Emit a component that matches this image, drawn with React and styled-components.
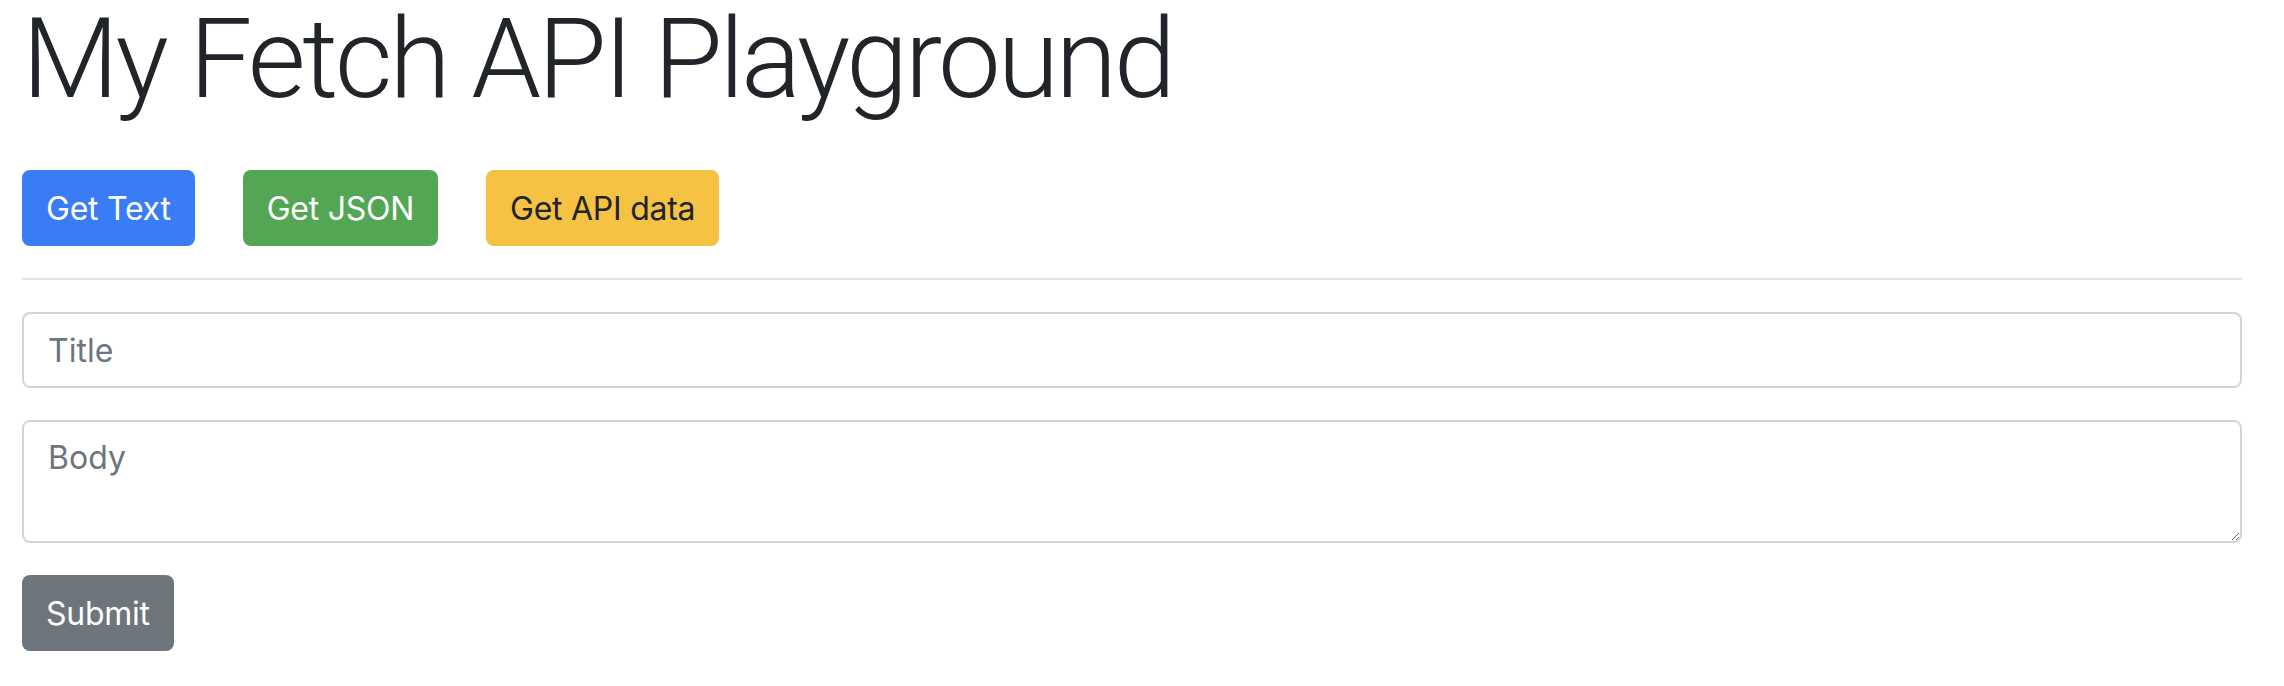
import React from "react";
import styled, { createGlobalStyle } from "styled-components";

const GlobalStyle = createGlobalStyle`
  html, body {
    margin: 0;
    padding: 0;
    background: #ffffff;
  }
  body {
    font-family: Inter, "Noto Sans", "Liberation Sans", sans-serif;
    color: #212529;
  }
`;

const Page = styled.div`
  padding: 0 42px 0 22px;
  display: flex;
  flex-direction: column;
`;

const Title = styled.h1`
  margin: 0;
  padding-top: 3px;
  font-family: Roboto, Inter, "Liberation Sans", sans-serif;
  font-size: 112px;
  font-weight: 300;
  line-height: 112px;
  letter-spacing: -3.4px;
  color: #212529;
  white-space: nowrap;
`;

const ButtonRow = styled.div`
  display: flex;
  gap: 48px;
  margin-top: 55px;
`;

const colors = {
  primary: { bg: "#3a7cf6", fg: "#ffffff" },
  success: { bg: "#53a653", fg: "#ffffff" },
  warning: { bg: "#f6c244", fg: "#212529" },
  secondary: { bg: "#6e757d", fg: "#ffffff" },
};

const Button = styled.button`
  height: 76px;
  padding: 0 24px;
  border: none;
  border-radius: 8px;
  font-family: inherit;
  font-size: 32px;
  font-weight: 400;
  letter-spacing: -0.25px;
  background: ${(p) => colors[p.$variant].bg};
  color: ${(p) => colors[p.$variant].fg};
  cursor: pointer;
  align-self: flex-start;
`;

const Divider = styled.hr`
  margin: 32px 0 32px;
  border: none;
  border-top: 2px solid #e3e3e3;
`;

const Form = styled.form`
  display: flex;
  flex-direction: column;
  gap: 32px;
`;

const fieldBase = `
  box-sizing: border-box;
  width: 100%;
  border: 2px solid #ced4da;
  border-radius: 8px;
  padding: 12px 24px;
  font-family: inherit;
  font-size: 32px;
  line-height: 48px;
  color: #495057;
  background: #ffffff;
  outline: none;
  &::placeholder {
    color: #6c757d;
  }
`;

const Input = styled.input`
  ${fieldBase}
  height: 76px;
`;

const TextArea = styled.textarea`
  ${fieldBase}
  height: 123px;
  resize: vertical;
  display: block;
`;

export default function App() {
  return (
    <>
      <GlobalStyle />
      <Page>
        <Title>My Fetch API Playground</Title>
        <ButtonRow>
          <Button $variant="primary">Get Text</Button>
          <Button $variant="success">Get JSON</Button>
          <Button $variant="warning">Get API data</Button>
        </ButtonRow>
        <Divider />
        <Form onSubmit={(e) => e.preventDefault()}>
          <Input type="text" placeholder="Title" />
          <TextArea placeholder="Body" />
          <Button $variant="secondary" type="submit">
            Submit
          </Button>
        </Form>
      </Page>
    </>
  );
}
